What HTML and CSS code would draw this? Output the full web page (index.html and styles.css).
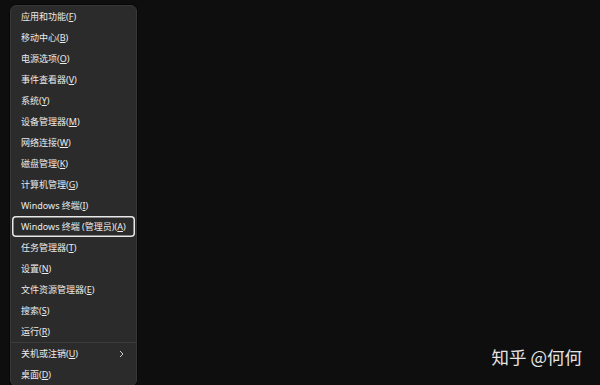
FILE: index.html
```html
<!DOCTYPE html>
<html lang="zh">
<head>
<meta name="viewport" content="width=device-width, initial-scale=1.0">
  <title>Win+X</title>
  <link rel="stylesheet" href="styles.css">
</head>
<body>

  <div class="menu">
    <div class="item"><span>应用和功能(<u>F</u>)</span></div>
    <div class="item"><span>移动中心(<u>B</u>)</span></div>
    <div class="item"><span>电源选项(<u>O</u>)</span></div>
    <div class="item"><span>事件查看器(<u>V</u>)</span></div>
    <div class="item"><span>系统(<u>Y</u>)</span></div>
    <div class="item"><span>设备管理器(<u>M</u>)</span></div>
    <div class="item"><span>网络连接(<u>W</u>)</span></div>
    <div class="item"><span>磁盘管理(<u>K</u>)</span></div>
    <div class="item"><span>计算机管理(<u>G</u>)</span></div>
    <div class="item"><span>Windows 终端(<u>I</u>)</span></div>
    <div class="item activo"><span>Windows 终端 (管理员)(<u>A</u>)</span></div>
    <div class="item"><span>任务管理器(<u>T</u>)</span></div>
    <div class="item"><span>设置(<u>N</u>)</span></div>
    <div class="item"><span>文件资源管理器(<u>E</u>)</span></div>
    <div class="item"><span>搜索(<u>S</u>)</span></div>
    <div class="item"><span>运行(<u>R</u>)</span></div>
    <div class="separador"></div>
    <div class="item">
      <span>关机或注销(<u>U</u>)</span>
      <svg class="flecha" width="5" height="8" viewBox="0 0 5 8"><path d="M1 1 L4 4 L1 7" fill="none" stroke="#cfcfcf" stroke-width="1"/></svg>
    </div>
    <div class="item"><span>桌面(<u>D</u>)</span></div>
  </div>

  <div class="marca">知乎 @何何</div>

</body>
</html>
```

FILE: styles.css
```css
* {
  margin: 0;
  padding: 0;
  box-sizing: border-box;
}

body {
  height: 100vh;
  background: #0e0e0e;
  font-family: "Noto Sans", "Noto Sans CJK SC", sans-serif;
  overflow: hidden;
  position: relative;
}

.menu {
  width: 127px;
  margin-top: 5px;
  margin-left: 10px;
  background: #2b2b2b;
  border: 1px solid #383838;
  border-radius: 6px;
  box-shadow: 0 0 0 1px #080808;
}

.item {
  height: 21px;
  margin: 0 1px;
  padding: 0 10px 0 9px;
  display: flex;
  align-items: center;
  justify-content: space-between;
  color: #ececec;
  font-size: 9px;
  white-space: nowrap;
  border-radius: 4px;
}

.item u {
  text-decoration-thickness: 1px;
  text-underline-offset: 1px;
}

.activo {
  box-shadow: inset 0 0 0 1.5px #e8e8e8;
}

.separador {
  height: 1px;
  background: #3c3c3c;
}

.flecha {
  margin-right: 1px;
}

.marca {
  position: absolute;
  right: 18px;
  bottom: 16px;
  color: #e4e4e4;
  font-size: 17.5px;
  font-family: "Noto Sans CJK SC", sans-serif;
}
```
